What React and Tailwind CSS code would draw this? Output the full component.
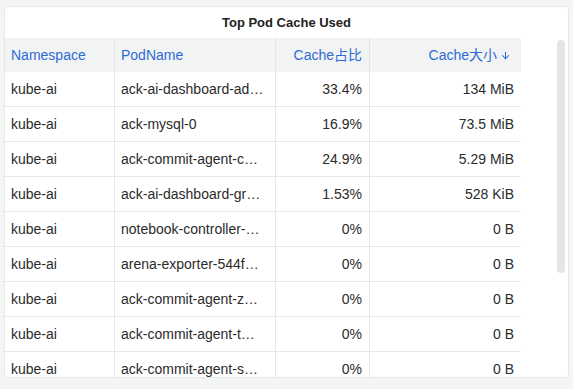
import { ArrowDown } from 'lucide-react';

const rows = [
    ['kube-ai', 'ack-ai-dashboard-ad…', '33.4%', '134 MiB'],
    ['kube-ai', 'ack-mysql-0', '16.9%', '73.5 MiB'],
    ['kube-ai', 'ack-commit-agent-c…', '24.9%', '5.29 MiB'],
    ['kube-ai', 'ack-ai-dashboard-gr…', '1.53%', '528 KiB'],
    ['kube-ai', 'notebook-controller-…', '0%', '0 B'],
    ['kube-ai', 'arena-exporter-544f…', '0%', '0 B'],
    ['kube-ai', 'ack-commit-agent-z…', '0%', '0 B'],
    ['kube-ai', 'ack-commit-agent-t…', '0%', '0 B'],
    ['kube-ai', 'ack-commit-agent-s…', '0%', '0 B'],
];

export default function App() {
    return (
        <div
            className="w-[573px] h-[389px] bg-[#f4f5f5] pt-[6px] pl-[4px] overflow-hidden"
            style={{ fontFamily: '"Liberation Sans", "Noto Sans CJK SC", sans-serif' }}
        >
            <div className="w-[565px] h-[372px] bg-white border border-[#e6e7e8] rounded-[3px] flex flex-col overflow-hidden">
                {/* Title */}
                <div className="h-[31px] shrink-0 flex items-center justify-center text-[13px] font-bold text-[#222]">
                    Top Pod Cache Used
                </div>

                <div className="flex-1 flex min-h-0">
                    {/* Table */}
                    <div className="w-[516px] shrink-0 overflow-hidden text-[14px]">
                        <div className="flex h-[34px] bg-[#f2f3f3] text-[#2e6bd6]">
                            <div className="w-[110px] flex items-center pl-[6px] border-r border-[#e2e3e4]">Namespace</div>
                            <div className="w-[161px] flex items-center pl-[6px] border-r border-[#e2e3e4]">PodName</div>
                            <div className="w-[94px] flex items-center justify-end pr-[7px] border-r border-[#e2e3e4]">Cache占比</div>
                            <div className="flex-1 flex items-center justify-end pr-[10px] gap-[3px]">
                                Cache大小
                                <ArrowDown size={11} strokeWidth={2.2} />
                            </div>
                        </div>
                        {rows.map((r, i) => (
                            <div key={i} className="flex h-[35px] shrink-0 border-b border-[#e6e7e8] text-[#2b2b2b]">
                                <div className="w-[110px] flex items-center pl-[6px] border-r border-[#e6e7e8]">{r[0]}</div>
                                <div className="w-[161px] flex items-center pl-[6px] border-r border-[#e6e7e8] whitespace-nowrap overflow-hidden">{r[1]}</div>
                                <div className="w-[94px] flex items-center justify-end pr-[7px] border-r border-[#e6e7e8]">{r[2]}</div>
                                <div className="flex-1 flex items-center justify-end pr-[7px]">{r[3]}</div>
                            </div>
                        ))}
                    </div>

                    {/* Scrollbar */}
                    <div className="flex-1 flex justify-end pr-[3px] pt-[2px]">
                        <div className="w-[8px] h-[233px] rounded-full bg-[#e4e5e6]" />
                    </div>
                </div>
            </div>
        </div>
    );
}
